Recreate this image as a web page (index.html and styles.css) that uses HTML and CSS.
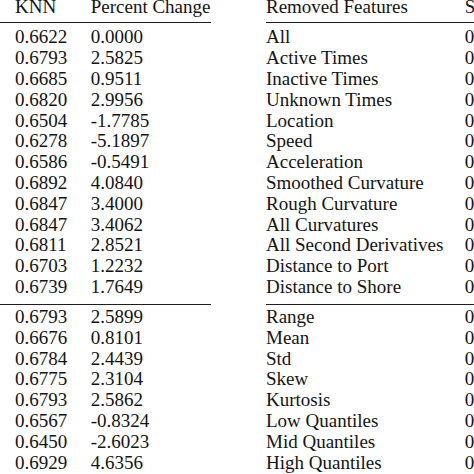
FILE: index.html
```html
<!DOCTYPE html>
<html>
<head>
<meta charset="utf-8">
<link rel="stylesheet" href="styles.css">
</head>
<body>
<div class="page">
  <div class="tbl left">
    <div class="head row"><span>KNN</span><span>Percent Change</span></div>
    <div class="group first">
      <div class="row"><span>0.6622</span><span>0.0000</span></div>
      <div class="row"><span>0.6793</span><span>2.5825</span></div>
      <div class="row"><span>0.6685</span><span>0.9511</span></div>
      <div class="row"><span>0.6820</span><span>2.9956</span></div>
      <div class="row"><span>0.6504</span><span>-1.7785</span></div>
      <div class="row"><span>0.6278</span><span>-5.1897</span></div>
      <div class="row"><span>0.6586</span><span>-0.5491</span></div>
      <div class="row"><span>0.6892</span><span>4.0840</span></div>
      <div class="row"><span>0.6847</span><span>3.4000</span></div>
      <div class="row"><span>0.6847</span><span>3.4062</span></div>
      <div class="row"><span>0.6811</span><span>2.8521</span></div>
      <div class="row"><span>0.6703</span><span>1.2232</span></div>
      <div class="row"><span>0.6739</span><span>1.7649</span></div>
    </div>
    <div class="group second">
      <div class="row"><span>0.6793</span><span>2.5899</span></div>
      <div class="row"><span>0.6676</span><span>0.8101</span></div>
      <div class="row"><span>0.6784</span><span>2.4439</span></div>
      <div class="row"><span>0.6775</span><span>2.3104</span></div>
      <div class="row"><span>0.6793</span><span>2.5862</span></div>
      <div class="row"><span>0.6567</span><span>-0.8324</span></div>
      <div class="row"><span>0.6450</span><span>-2.6023</span></div>
      <div class="row"><span>0.6929</span><span>4.6356</span></div>
    </div>
  </div>
  <div class="tbl right">
    <div class="head row"><span>Removed Features</span><span>S</span></div>
    <div class="group first">
      <div class="row"><span>All</span><span>0</span></div>
      <div class="row"><span>Active Times</span><span>0</span></div>
      <div class="row"><span>Inactive Times</span><span>0</span></div>
      <div class="row"><span>Unknown Times</span><span>0</span></div>
      <div class="row"><span>Location</span><span>0</span></div>
      <div class="row"><span>Speed</span><span>0</span></div>
      <div class="row"><span>Acceleration</span><span>0</span></div>
      <div class="row"><span>Smoothed Curvature</span><span>0</span></div>
      <div class="row"><span>Rough Curvature</span><span>0</span></div>
      <div class="row"><span>All Curvatures</span><span>0</span></div>
      <div class="row"><span>All Second Derivatives</span><span>0</span></div>
      <div class="row"><span>Distance to Port</span><span>0</span></div>
      <div class="row"><span>Distance to Shore</span><span>0</span></div>
    </div>
    <div class="group second">
      <div class="row"><span>Range</span><span>0</span></div>
      <div class="row"><span>Mean</span><span>0</span></div>
      <div class="row"><span>Std</span><span>0</span></div>
      <div class="row"><span>Skew</span><span>0</span></div>
      <div class="row"><span>Kurtosis</span><span>0</span></div>
      <div class="row"><span>Low Quantiles</span><span>0</span></div>
      <div class="row"><span>Mid Quantiles</span><span>0</span></div>
      <div class="row"><span>High Quantiles</span><span>0</span></div>
    </div>
  </div>
</div>
</body>
</html>
```

FILE: styles.css
```css
html, body {
  margin: 0;
  padding: 0;
  background: #ffffff;
  overflow: hidden;
  width: 474px;
  height: 474px;
}

.page {
  display: flex;
  align-items: flex-start;
  margin-top: -3.5px;
  font-family: "Liberation Serif", "Times New Roman", serif;
  font-size: 19px;
  color: #141414;
  white-space: nowrap;
}

.tbl {
  flex: none;
}

.left {
  width: 210.6px;
}

.right {
  width: 260px;
  margin-left: 55.4px;
}

.row {
  display: grid;
  height: 20.8px;
  line-height: 20.8px;
}

.left .row {
  grid-template-columns: 75.7px 1fr;
  padding-left: 15px;
}

.right .row {
  grid-template-columns: 198.7px 1fr;
}

.head {
  padding-bottom: 5px;
  border-bottom: 1px solid #1e1e1e;
}

.group.first {
  padding-top: 4.2px;
  padding-bottom: 6px;
  border-bottom: 1px solid #1e1e1e;
}

.group.second {
  padding-top: 2.1px;
}
```
